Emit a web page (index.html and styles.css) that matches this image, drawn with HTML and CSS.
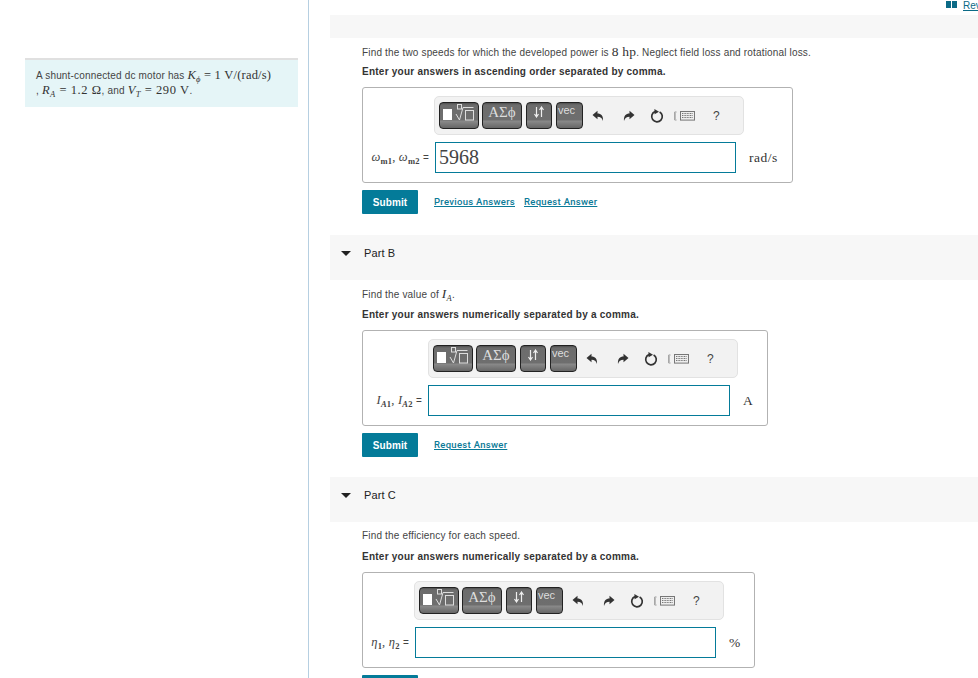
FILE: index.html
```html
<!DOCTYPE html>
<html lang="en">
<head>
<meta charset="utf-8">
<title>Shunt-connected dc motor</title>
<link rel="stylesheet" href="styles.css">
</head>
<body>
<svg class="defs" width="0" height="0" aria-hidden="true">
  <symbol id="i-undo" viewBox="0 0 12 12"><path d="M0.5 5 L5.5 0.8 V3.4 C9 3.4 11.5 5.6 11 11 C10 8 8.5 6.8 5.5 6.8 V9.2 Z" fill="#333"/></symbol>
  <symbol id="i-redo" viewBox="0 0 12 12"><path d="M11.5 5 L6.5 0.8 V3.4 C3 3.4 .5 5.6 1 11 C2 8 3.5 6.8 6.5 6.8 V9.2 Z" fill="#333"/></symbol>
  <symbol id="i-reset" viewBox="0 0 14 14"><path d="M5 2.6 A5.3 5.3 0 1 0 9.6 2.9" fill="none" stroke="#333" stroke-width="1.7"/><path d="M4.4 0 L9 2.7 L4.6 5.2 Z" fill="#333"/></symbol>
  <symbol id="i-keys" viewBox="0 0 21 10"><path d="M2.5 1 H.7 V9 H2.5 M0.7 3 H2 M.7 5 H2 M.7 7 H2" fill="none" stroke="#999" stroke-width="1"/><rect x="6.5" y=".5" width="14" height="8.6" fill="#eee" stroke="#777"/><path d="M8 2.5 H19 M8 4.5 H19 M8 6.5 H19" stroke="#777" stroke-width="1" stroke-dasharray="1 .6"/></symbol>
  <symbol id="i-radical" viewBox="0 0 38 25"><rect x="3" y="6" width="9" height="11" fill="#fff"/><rect x="17.5" y="1.5" width="4" height="4.5" fill="none" stroke="#ddd"/><path d="M16 11 L19.5 17 L23 4.5 H33.5" fill="none" stroke="#ddd"/><rect x="25.5" y="7.5" width="8" height="9.5" fill="none" stroke="#ddd"/></symbol>
  <symbol id="i-arrows" viewBox="0 0 12 12"><path d="M3.5 1 V10 M1.5 8 L3.5 11 L5.5 8 M8.5 11 V2 M6.5 4 L8.5 1 L10.5 4" fill="none" stroke="#eee" stroke-width="1.2"/></symbol>
</svg>

<div class="page">
  <aside class="side">
    <div class="info">A shunt-connected dc motor has <span class="m"><i>K</i><sub><i>ϕ</i></sub> = 1 V/(rad/s)</span> <span class="nb">, <span class="m wide"><i>R</i><sub><i>A</i></sub> = 1.2 Ω</span>,</span> and <span class="m wide"><i>V</i><sub><i>T</i></sub> = 290 V</span>.</div>
  </aside>

  <main class="main">
    <div class="topbar">
      <svg class="book" width="11" height="7" viewBox="0 0 11 7"><rect width="5" height="7" fill="#0b6a86"/><rect x="6" width="5" height="7" fill="#0b6a86"/></svg>
      <a class="review" href="#">Review</a>
    </div>

    <div class="band band-top"></div>
    <section class="body body-first">
      <p class="prompt">Find the two speeds for which the developed power is <span class="m big">8 hp</span>. Neglect field loss and rotational loss.</p>
      <p class="instr">Enter your answers in ascending order separated by comma.</p>
      <div class="box box-a">
        <div class="tools">
          <span class="btn w40"><svg width="38" height="25"><use href="#i-radical"/></svg></span>
          <span class="btn w40 greek">ΑΣϕ</span>
          <span class="btn w26"><svg width="12" height="12"><use href="#i-arrows"/></svg></span>
          <span class="btn w27 vec">vec</span>
          <span class="plain p1"><svg width="12" height="12"><use href="#i-undo"/></svg></span>
          <span class="plain p2"><svg width="12" height="12"><use href="#i-redo"/></svg></span>
          <span class="plain p3"><svg width="14" height="14"><use href="#i-reset"/></svg></span>
          <span class="plain p4"><svg width="21" height="10"><use href="#i-keys"/></svg></span>
          <span class="plain help">?</span>
        </div>
        <label class="lab m"><i>ω</i><sub>m1</sub>, <i>ω</i><sub>m2</sub> <span class="eq">=</span></label>
        <div class="field">5968</div>
        <span class="unit m">rad/s</span>
      </div>
      <div class="actions">
        <a class="submit" href="#">Submit</a>
        <a class="link" href="#">Previous Answers</a>
        <a class="link" href="#">Request Answer</a>
      </div>
    </section>

    <header class="band part"><span class="tri"></span><h2>Part B</h2></header>
    <section class="body">
      <p class="prompt">Find the value of <span class="m big"><i>I</i><sub><i>A</i></sub></span>.</p>
      <p class="instr">Enter your answers numerically separated by a comma.</p>
      <div class="box box-b">
        <div class="tools">
          <span class="btn w40"><svg width="38" height="25"><use href="#i-radical"/></svg></span>
          <span class="btn w40 greek">ΑΣϕ</span>
          <span class="btn w26"><svg width="12" height="12"><use href="#i-arrows"/></svg></span>
          <span class="btn w27 vec">vec</span>
          <span class="plain p1"><svg width="12" height="12"><use href="#i-undo"/></svg></span>
          <span class="plain p2"><svg width="12" height="12"><use href="#i-redo"/></svg></span>
          <span class="plain p3"><svg width="14" height="14"><use href="#i-reset"/></svg></span>
          <span class="plain p4"><svg width="21" height="10"><use href="#i-keys"/></svg></span>
          <span class="plain help">?</span>
        </div>
        <label class="lab m"><i>I</i><sub><i>A</i>1</sub>, <i>I</i><sub><i>A</i>2</sub> <span class="eq">=</span></label>
        <div class="field"></div>
        <span class="unit m">A</span>
      </div>
      <div class="actions">
        <a class="submit" href="#">Submit</a>
        <a class="link" href="#">Request Answer</a>
      </div>
    </section>

    <header class="band part"><span class="tri"></span><h2>Part C</h2></header>
    <section class="body">
      <p class="prompt">Find the efficiency for each speed.</p>
      <p class="instr">Enter your answers numerically separated by a comma.</p>
      <div class="box box-c">
        <div class="tools">
          <span class="btn w40"><svg width="38" height="25"><use href="#i-radical"/></svg></span>
          <span class="btn w40 greek">ΑΣϕ</span>
          <span class="btn w26"><svg width="12" height="12"><use href="#i-arrows"/></svg></span>
          <span class="btn w27 vec">vec</span>
          <span class="plain p1"><svg width="12" height="12"><use href="#i-undo"/></svg></span>
          <span class="plain p2"><svg width="12" height="12"><use href="#i-redo"/></svg></span>
          <span class="plain p3"><svg width="14" height="14"><use href="#i-reset"/></svg></span>
          <span class="plain p4"><svg width="21" height="10"><use href="#i-keys"/></svg></span>
          <span class="plain help">?</span>
        </div>
        <label class="lab m"><i>η</i><sub>1</sub>, <i>η</i><sub>2</sub> <span class="eq">=</span></label>
        <div class="field"></div>
        <span class="unit m">%</span>
      </div>
      <div class="actions">
        <a class="submit" href="#">Submit</a>
      </div>
    </section>
  </main>
</div>
</body>
</html>
```

FILE: styles.css
```css
* { box-sizing: border-box; }
html, body { margin: 0; padding: 0; height: 100%; overflow: hidden; background: #fff; }
body { font-family: "Liberation Sans", Arial, sans-serif; font-size: 10px; color: #333; }
.defs { display: block; height: 0; }
.page { display: flex; width: 978px; height: 678px; overflow: hidden; }

.side { flex: 0 0 309px; border-right: 1px solid #b6cfe1; padding: 58px 10px 0 25px; }
.info { height: 49px; background: #e5f5f7; border-top: 2px solid #e0e0e0; padding: 8px 11px 0; line-height: 15px; letter-spacing: .17px; color: #444; }
.nb { white-space: nowrap; }

.m { font-family: "Liberation Serif", "Times New Roman", serif; font-size: 12.5px; color: #333; letter-spacing: .2px; }
.m.wide { letter-spacing: .55px; }
.m sub { font-size: 8.5px; line-height: 0; vertical-align: -3px; }
.big { font-size: 13.5px; }

.main { flex: 1; min-width: 0; overflow: hidden; }
.topbar { display: flex; align-items: flex-start; gap: 6px; height: 15px; padding: 1px 0 0 637px; white-space: nowrap; }
.book { flex: none; }
.review { color: #0b6a86; font-size: 10px; line-height: 9px; text-decoration: underline; }

.band { background: #f7f7f7; margin-left: 21px; }
.band-top { height: 23px; }
.part { display: flex; align-items: flex-start; height: 45px; padding: 12px 0 0 11px; }
.part h2 { margin: 0 0 0 13px; font-size: 11px; line-height: 13px; font-weight: 400; color: #222; letter-spacing: .1px; }
.tri { width: 0; height: 0; margin-top: 4px; border-left: 5px solid transparent; border-right: 5px solid transparent; border-top: 5px solid #222; }

.body { padding: 0 0 20px 53px; }
.body-first { padding-bottom: 21px; }
.prompt { margin: 0; padding-top: 8px; height: 19px; line-height: 12px; letter-spacing: .17px; color: #444; white-space: nowrap; }
.instr { margin: 0; padding-top: 10px; height: 31px; line-height: 12px; font-weight: 700; letter-spacing: .24px; color: #333; white-space: nowrap; }
.body-first .instr { height: 30px; padding-top: 9px; }

.box { display: grid; width: max-content; height: 96px; border: 1px solid #b2b2b2; border-radius: 3px; column-gap: 6px; row-gap: 7px; grid-template-rows: 39px 31px; padding-top: 8px; align-items: center; }
.box-a { grid-template-columns: 59px 301px 45px; padding-left: 7px; padding-right: 5px; }
.box-b { grid-template-columns: 50px 302px 25px; padding-left: 9px; padding-right: 6px; }
.box-c { grid-template-columns: 38px 301px 25px; padding-left: 8px; padding-right: 7px; }
.box .unit { margin-left: 7px; white-space: nowrap; font-size: 13.5px; letter-spacing: .5px; }

.tools { grid-column: 2 / 4; display: flex; align-items: center; width: 310px; height: 39px; padding-left: 4px; background: #f2f2f2; border: 1px solid #e2e2e2; border-radius: 5px; }
.box-a .tools, .box-c .tools { margin-left: -1px; }
.btn { display: flex; justify-content: center; height: 27px; margin-right: 3px; color: #ddd; border: 1px solid #222; border-radius: 4px; background: linear-gradient(#4f4f4f 0, #6c6c6c 2px, #6e6e6e 17px, #8a8a8a 18px, #666 100%); overflow: hidden; }
.w40 { width: 40px; }
.w26 { width: 26px; margin-left: 1px; }
.w27 { width: 27px; margin-left: 1px; }
.greek { font-family: "Liberation Serif", serif; font-size: 15px; line-height: 19px; }
.vec { font-size: 11px; line-height: 14px; justify-content: flex-start; padding-left: 1px; }
.btn.w26 svg { margin-top: 3px; }
.plain { display: flex; align-items: center; justify-content: center; }
.p1 { margin-left: 6px; width: 12px; }
.p2 { margin-left: 19px; width: 12px; }
.p3 { margin-left: 15px; width: 14px; }
.p4 { margin-left: 10px; width: 21px; }
.help { margin-left: 18px; font-size: 12px; color: #444; }

.lab { white-space: nowrap; font-size: 12.5px; text-align: right; color: #444; letter-spacing: .2px; }
.lab sub { font-size: 8.5px; font-weight: 700; }
.eq { font-family: "Liberation Sans", sans-serif; font-size: 10px; }
.field { height: 31px; border: 1px solid #047b99; background: #fff; padding-left: 3px; font-family: "Liberation Serif", serif; font-size: 20px; line-height: 28px; color: #444; }

.actions { display: flex; align-items: center; height: 24px; margin-top: 7px; }
.submit { display: flex; align-items: center; justify-content: center; width: 56px; height: 24px; margin-right: 16px; background: #047b99; border-radius: 1px; color: #fff; font-size: 10px; font-weight: 700; letter-spacing: .1px; text-decoration: none; }
.link { margin: 0 9px 2px 0; font-family: Roboto, sans-serif; font-size: 9.5px; font-weight: 500; letter-spacing: .3px; color: #0b7a97; text-decoration: underline; }
```
